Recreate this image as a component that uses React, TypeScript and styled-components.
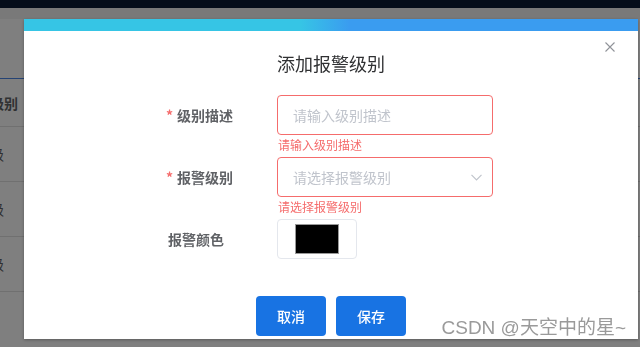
import React from "react";
import styled, { createGlobalStyle } from "styled-components";

const GlobalStyle = createGlobalStyle`
  html, body { margin: 0; padding: 0; }
  body {
    width: 640px;
    height: 347px;
    overflow: hidden;
    background: #ffffff;
    font-family: "Noto Sans CJK SC", "Liberation Sans", sans-serif;
  }
  * { box-sizing: border-box; }
`;

/* ---------- underlying page ---------- */
const Page = styled.div`
  width: 640px;
  height: 347px;
  display: flex;
  flex-direction: column;
  background: #ffffff;
`;

const TopBar = styled.div`
  height: 8px;
  background: #0a1a34;
`;

const SubBar = styled.div`
  height: 11px;
  background: #f2f2f2;
`;

const Spacer = styled.div`
  height: 59px;
`;

const Table = styled.div`
  border-top: 1px solid #4a86e8;
  display: flex;
  flex-direction: column;
`;

const Row = styled.div<{ $h: number }>`
  height: ${(p) => p.$h}px;
  border-bottom: 1px solid #e0e0e0;
  display: flex;
  align-items: center;
`;

const Cell = styled.div<{ $head?: boolean }>`
  width: 100px;
  margin-left: -60px;
  text-align: center;
  font-size: 14px;
  color: #606266;
  font-weight: ${(p) => (p.$head ? 700 : 400)};
`;

/* ---------- overlay & dialog ---------- */
const Mask = styled.div`
  position: fixed;
  inset: 0;
  background: rgba(0, 0, 0, 0.5);
`;

const Dialog = styled.div`
  position: fixed;
  top: 19px;
  left: 24px;
  width: 614px;
  height: 320px;
  background: #ffffff;
  box-shadow: 0 1px 3px rgba(0, 0, 0, 0.3);
  display: flex;
  flex-direction: column;
`;

const Stripe = styled.div`
  height: 12px;
  flex: none;
  background: linear-gradient(
    90deg,
    #36c5e5 0%,
    #36c5e5 45%,
    #3a9cf0 53%,
    #3a9cf0 100%
  );
`;

const Header = styled.div`
  padding-top: 20px;
  height: 64px;
  flex: none;
  text-align: center;
`;

const Title = styled.div`
  font-size: 18px;
  line-height: 24px;
  color: #303133;
  font-weight: 400;
`;

const Close = styled.button`
  position: absolute;
  top: 23px;
  right: 23px;
  width: 10px;
  height: 10px;
  padding: 0;
  border: none;
  background: transparent;
  display: flex;
  cursor: pointer;
`;

const Form = styled.div`
  padding-left: 144px;
  display: flex;
  flex-direction: column;
`;

const Item = styled.div<{ $last?: boolean }>`
  display: grid;
  grid-template-columns: 109px 216px;
  margin-bottom: ${(p) => (p.$last ? 0 : 22)}px;
`;

const Label = styled.label`
  font-size: 14px;
  line-height: 40px;
  font-weight: 700;
  color: #606266;
`;

const Star = styled.span`
  color: #f56c6c;
  margin-left: -2px;
  margin-right: 4px;
`;

const Control = styled.div`
  position: relative;
`;

const Input = styled.div<{ $error?: boolean }>`
  height: 40px;
  border: 1px solid ${(p) => (p.$error ? "#f56c6c" : "#dcdfe6")};
  border-radius: 4px;
  padding: 0 15px;
  display: flex;
  align-items: center;
  justify-content: space-between;
  font-size: 14px;
  color: #c0c4cc;
`;

const Chevron = styled.svg`
  width: 11px;
  height: 7px;
  margin-right: -5px;
`;

const Error = styled.div`
  position: absolute;
  top: 100%;
  left: 1px;
  padding-top: 4px;
  font-size: 12px;
  line-height: 12px;
  color: #f56c6c;
  white-space: nowrap;
`;

const ColorBox = styled.div`
  width: 80px;
  height: 40px;
  border: 1px solid #e4e7ed;
  border-radius: 4px;
  display: flex;
  align-items: center;
  justify-content: center;
`;

const Swatch = styled.div<{ $color: string }>`
  width: 44px;
  height: 30px;
  border: 1px solid #999999;
  background: ${(p) => p.$color};
`;

const Footer = styled.div`
  margin-top: 37px;
  display: flex;
  justify-content: center;
  gap: 10px;
`;

const Button = styled.button`
  width: 70px;
  height: 40px;
  border: none;
  border-radius: 4px;
  background: #1873e3;
  color: #ffffff;
  font-family: "Noto Sans CJK SC", sans-serif;
  font-size: 14px;
  font-weight: 500;
  cursor: pointer;
`;

const Watermark = styled.div`
  position: fixed;
  right: 14px;
  bottom: 8px;
  font-family: "Liberation Sans", "Noto Sans CJK SC", sans-serif;
  font-size: 19px;
  line-height: 22px;
  color: #9a9a9a;
  text-shadow: 0 0 1px #ffffff;
  white-space: nowrap;
`;

export default function App() {
  const rows = ["一级", "二级", "三级"];
  return (
    <>
      <GlobalStyle />
      <Page>
        <TopBar />
        <SubBar />
        <Spacer />
        <Table>
          <Row $h={48}>
            <Cell $head>报警级别</Cell>
          </Row>
          {rows.map((r) => (
            <Row key={r} $h={55}>
              <Cell>{r}</Cell>
            </Row>
          ))}
        </Table>
      </Page>
      <Mask />
      <Dialog>
        <Stripe />
        <Header>
          <Title>添加报警级别</Title>
        </Header>
        <Close aria-label="close">
          <svg width="10" height="10" viewBox="0 0 10 10">
            <path d="M0.5 0.5 L9.5 9.5 M9.5 0.5 L0.5 9.5" stroke="#909399" strokeWidth="1.1" fill="none" />
          </svg>
        </Close>
        <Form>
          <Item>
            <Label>
              <Star>*</Star>级别描述
            </Label>
            <Control>
              <Input $error>请输入级别描述</Input>
              <Error>请输入级别描述</Error>
            </Control>
          </Item>
          <Item>
            <Label>
              <Star>*</Star>报警级别
            </Label>
            <Control>
              <Input $error>
                <span>请选择报警级别</span>
                <Chevron viewBox="0 0 11 7">
                  <path d="M0.5 0.8 L5.5 5.8 L10.5 0.8" stroke="#c0c4cc" strokeWidth="1.2" fill="none" />
                </Chevron>
              </Input>
              <Error>请选择报警级别</Error>
            </Control>
          </Item>
          <Item $last>
            <Label>报警颜色</Label>
            <Control>
              <ColorBox>
                <Swatch $color="#000000" />
              </ColorBox>
            </Control>
          </Item>
        </Form>
        <Footer>
          <Button>取消</Button>
          <Button>保存</Button>
        </Footer>
      </Dialog>
      <Watermark>CSDN @天空中的星~</Watermark>
    </>
  );
}
